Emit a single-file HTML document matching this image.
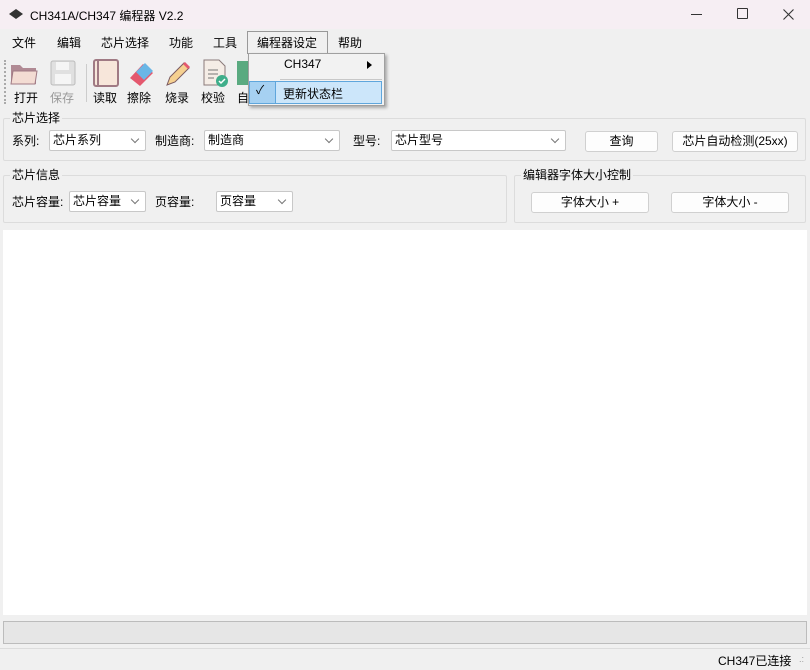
<!DOCTYPE html><html><head><meta charset="utf-8"><style>
*{box-sizing:border-box;margin:0;padding:0}
body{width:810px;height:670px;background:#f0f0f0;font-family:"Liberation Sans","Noto Sans CJK SC",sans-serif;font-size:12px;color:#000;position:relative;overflow:hidden}
.a{position:absolute;white-space:nowrap}
.title{left:0;top:0;width:810px;height:29px;background:#f6eef3}
.combo{position:absolute;height:21px;background:#fff;border:1px solid #c8c8c8;border-radius:2px;padding:2px 3px;line-height:15px}
.combo:after{content:"";position:absolute;right:7px;top:5px;width:5px;height:5px;border-right:1px solid #777;border-bottom:1px solid #777;transform:rotate(45deg)}
.btn{position:absolute;height:21px;background:#fdfdfd;border:1px solid #d0d0d0;border-radius:3px;text-align:center;line-height:19px}
.grp{position:absolute;border:1px solid #dcdcdc;border-radius:2px}
.lg{position:absolute;background:#f0f0f0;padding:0 2px;top:-9px;left:6px;line-height:16px}
.ico{position:absolute;top:59px;width:28px;height:28px}
</style></head><body>
<div class="a title"></div>
<svg class="a" style="left:9px;top:9px" width="14" height="10"><path d="M7 0L14 5L7 10L0 5Z" fill="#333"/></svg>
<div class="a" style="left:30px;top:7px;font-size:12px">CH341A/CH347 编程器 V2.2</div>
<div class="a" style="left:691px;top:14px;width:11px;height:1px;background:#333"></div>
<div class="a" style="left:737px;top:8px;width:11px;height:11px;border:1px solid #333;border-radius:1px"></div>
<svg class="a" style="left:783px;top:9px" width="11" height="11"><path d="M0.5 0.5L10.5 10.5M10.5 0.5L0.5 10.5" stroke="#333" stroke-width="1.1"/></svg>

<div class="a" style="left:12px;top:34px">文件</div>
<div class="a" style="left:57px;top:34px">编辑</div>
<div class="a" style="left:101px;top:34px">芯片选择</div>
<div class="a" style="left:169px;top:34px">功能</div>
<div class="a" style="left:213px;top:34px">工具</div>
<div class="a" style="left:247px;top:31px;width:81px;height:23px;border:1px solid #999;border-bottom:none;background:#f0f0f0"></div>
<div class="a" style="left:257px;top:34px">编程器设定</div>
<div class="a" style="left:338px;top:34px">帮助</div>

<div class="a" style="left:4px;top:60px;height:44px;border-left:2px dotted #aaa"></div>
<div class="a" style="left:86px;top:64px;height:38px;border-left:1px solid #ccc"></div>
<svg class="ico" style="left:10px"><path d="M1 6h9l3 3h13v16H1z" fill="#b08a94"/><path d="M3 12h24l-2 13H1z" fill="#f3dcd3" stroke="#a07a84"/></svg>
<svg class="ico" style="left:49px"><rect x="2" y="2" width="24" height="24" rx="2" fill="#e0e0e0" stroke="#bbb"/><rect x="7" y="3" width="13" height="8" fill="#f5f5f5"/><rect x="6" y="15" width="16" height="10" fill="#f5f5f5"/></svg>
<svg class="ico" style="left:92px"><rect x="2" y="1" width="24" height="26" rx="2" fill="#f7e6da" stroke="#a07a84" stroke-width="2"/><path d="M6 2v24" stroke="#a07a84" stroke-width="2"/></svg>
<svg class="ico" style="left:127px"><path d="M3 19L16 5l10 9-13 13z" fill="#e4586e"/><path d="M9 13L18 4l8 8-9 9z" fill="#6ab6e6"/></svg>
<svg class="ico" style="left:164px"><path d="M3 26l3-8L20 4l5 5-14 14z" fill="#f5d090" stroke="#7a5a60"/><path d="M19 5l5 5 2-2-5-5z" fill="#e4586e"/></svg>
<svg class="ico" style="left:201px"><path d="M3 1h15l6 6v19H3z" fill="#f5ede6" stroke="#8a7a7a"/><path d="M7 11h10M7 15h10M7 19h6" stroke="#777"/><circle cx="21" cy="22" r="6" fill="#3fae8a"/><path d="M18 22l2 2 4-4" stroke="#fff" fill="none" stroke-width="1.5"/></svg>
<svg class="ico" style="left:237px"><rect x="0" y="2" width="11" height="24" fill="#5aaa80"/></svg>
<div class="a" style="left:14px;top:89px">打开</div>
<div class="a" style="left:50px;top:89px;color:#999">保存</div>
<div class="a" style="left:93px;top:89px">读取</div>
<div class="a" style="left:127px;top:89px">擦除</div>
<div class="a" style="left:165px;top:89px">烧录</div>
<div class="a" style="left:201px;top:89px">校验</div>
<div class="a" style="left:237px;top:89px">自</div>

<div class="a" style="left:248px;top:53px;width:137px;height:53px;background:#f2f2f2;border:1px solid #a0a0a0;box-shadow:2px 2px 3px rgba(0,0,0,.3)"></div>
<div class="a" style="left:284px;top:57px">CH347</div>
<svg class="a" style="left:367px;top:61px" width="5" height="8"><path d="M0 0L5 4L0 8Z" fill="#000"/></svg>
<div class="a" style="left:280px;top:79px;width:102px;height:1px;background:#c8c8c8"></div>
<div class="a" style="left:249px;top:81px;width:133px;height:23px;background:#cce6fa;border:1px solid #5fa6dc"></div>
<div class="a" style="left:250px;top:82px;width:26px;height:21px;background:#a6d1f2;border-right:1px solid #5fa6dc"></div>
<div class="a" style="left:256px;top:81px;font-size:12px">✓</div>
<div class="a" style="left:283px;top:85px">更新状态栏</div>

<div class="grp" style="left:3px;top:118px;width:803px;height:43px"><span class="lg">芯片选择</span></div>
<div class="a" style="left:12px;top:132px">系列:</div>
<div class="combo" style="left:49px;top:130px;width:97px">芯片系列</div>
<div class="a" style="left:155px;top:132px">制造商:</div>
<div class="combo" style="left:204px;top:130px;width:136px">制造商</div>
<div class="a" style="left:353px;top:132px">型号:</div>
<div class="combo" style="left:391px;top:130px;width:175px">芯片型号</div>
<div class="btn" style="left:585px;top:131px;width:73px">查询</div>
<div class="btn" style="left:672px;top:131px;width:126px">芯片自动检测(25xx)</div>

<div class="grp" style="left:3px;top:175px;width:504px;height:48px"><span class="lg">芯片信息</span></div>
<div class="a" style="left:12px;top:193px">芯片容量:</div>
<div class="combo" style="left:69px;top:191px;width:77px">芯片容量</div>
<div class="a" style="left:155px;top:193px">页容量:</div>
<div class="combo" style="left:216px;top:191px;width:77px">页容量</div>
<div class="grp" style="left:514px;top:175px;width:292px;height:48px"><span class="lg">编辑器字体大小控制</span></div>
<div class="btn" style="left:531px;top:192px;width:118px">字体大小 +</div>
<div class="btn" style="left:671px;top:192px;width:118px">字体大小 -</div>

<div class="a" style="left:3px;top:230px;width:804px;height:385px;background:#fff"></div>
<div class="a" style="left:3px;top:621px;width:804px;height:23px;background:#e6e6e6;border:1px solid #bcbcbc"></div>
<div class="a" style="left:0;top:648px;width:810px;height:1px;background:#dcdcdc"></div>
<div class="a" style="left:718px;top:652px">CH347已连接</div>
<div class="a" style="left:799px;top:654px;color:#999;font-size:9px">.:</div>
</body></html>
